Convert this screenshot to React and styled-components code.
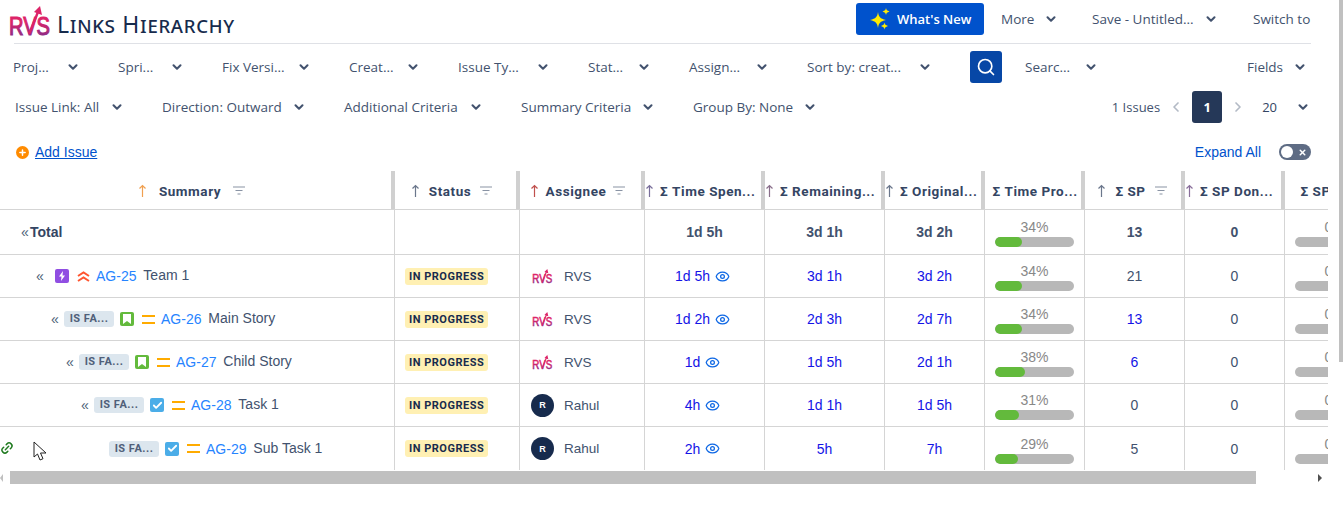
import React from "react";
import styled, { createGlobalStyle } from "styled-components";
import { ChevronDown, ChevronLeft, ChevronRight, Search, Eye, Check, X, Plus, Link2 } from "lucide-react";

const GlobalStyle = createGlobalStyle`
  html, body { margin: 0; padding: 0; background: #fff; overflow: hidden; }
  body { font-family: "Liberation Sans", Arial, sans-serif; color: #42526e; }
`;

const COLUMNS = "395px 125px 125px 120px 120px 100px 100px 100px 100px 100px";

const Page = styled.div`
  position: relative;
  width: 1343px;
  height: 514px;
  overflow: hidden;
`;

const TopBar = styled.header`
  display: flex;
  align-items: center;
  height: 43px;
  margin: 0 32px 0 14px;
  border-bottom: 1px solid #dfe1e6;
`;

const Brand = styled.div`
  display: flex;
  align-items: center;
  gap: 6px;
  margin-left: -5px;
  margin-right: auto;
`;

const Title = styled.h1`
  margin: 5px 0 0;
  font: 400 23px "Noto Sans", sans-serif;
  font-variant: small-caps;
  letter-spacing: 0.7px;
  color: #172b4d;
`;

const NewButton = styled.button`
  display: flex;
  align-items: center;
  gap: 7px;
  width: 128px;
  height: 32px;
  margin: 0 17px 5px 0;
  padding: 0 0 0 14px;
  border: 0;
  border-radius: 3px;
  background: #0052cc;
  color: #fff;
  font: 600 13px "Open Sans", sans-serif;
`;

const Filter = styled.div`
  display: flex;
  flex: none;
  align-items: center;
  justify-content: space-between;
  width: ${(p) => p.$w}px;
  margin-left: ${(p) => (p.$push ? "auto" : 0)};
  font: 400 13.5px "Open Sans", sans-serif;
  white-space: nowrap;
  color: #42526e;
`;

const TopLink = styled(Filter)`
  margin-right: ${(p) => p.$mr || 0}px;
  margin-bottom: 5px;
`;

const FilterRow = styled.div`
  display: flex;
  align-items: center;
  gap: 40px;
  height: 32px;
  padding: ${(p) => p.$pad};
`;

const SearchGroup = styled.div`
  display: flex;
  align-items: center;
  gap: 23px;
`;

const SearchButton = styled.button`
  display: flex;
  align-items: center;
  justify-content: center;
  width: 32px;
  height: 32px;
  padding: 0;
  border: 0;
  border-radius: 3px;
  background: #0747a6;
  color: #fff;
`;

const Pager = styled.div`
  display: flex;
  align-items: center;
  margin-left: auto;
  font: 400 13px "Open Sans", sans-serif;
  color: #42526e;
`;

const PagerArrow = styled.span`
  display: flex;
  margin: ${(p) => p.$m};
  color: #b3bac5;
`;

const PageNumber = styled.span`
  display: flex;
  align-items: center;
  justify-content: center;
  width: 30px;
  height: 32px;
  border-radius: 3px;
  background: #253858;
  color: #fff;
  font-weight: 700;
`;

const PageSize = styled.span`
  display: flex;
  align-items: center;
  gap: 19px;
  color: #344563;
`;

const ActionRow = styled.div`
  display: flex;
  align-items: center;
  height: 16px;
  margin-top: 21px;
  padding: 0 32px 0 16px;
  font-size: 14px;
`;

const AddIcon = styled.span`
  display: flex;
  align-items: center;
  justify-content: center;
  width: 13px;
  height: 13px;
  margin-right: 6px;
  border-radius: 50%;
  background: #ff8b00;
  color: #fff;
`;

const AddLink = styled.a`
  color: #0052cc;
  text-decoration: underline;
  margin-right: auto;
`;

const ExpandLink = styled.a`
  color: #0052cc;
  margin-right: 18px;
`;

const Toggle = styled.span`
  display: flex;
  align-items: center;
  justify-content: space-between;
  width: 32px;
  height: 16px;
  padding: 0 4px 0 2px;
  box-sizing: border-box;
  border-radius: 8px;
  background: #5e6c84;
  color: #fff;
`;

const Knob = styled.span`
  width: 12px;
  height: 12px;
  border-radius: 50%;
  background: #fff;
`;

const TableWrap = styled.div`
  width: 1328px;
  margin-top: 11px;
  overflow: hidden;
`;

const Row = styled.div`
  display: grid;
  grid-template-columns: ${COLUMNS};
  width: 1385px;
  height: ${(p) => p.$h}px;
  box-sizing: border-box;
  border-bottom: ${(p) => (p.$last ? "0" : "1px solid #d5d5d5")};
`;

const HeadCell = styled.div`
  display: flex;
  align-items: center;
  justify-content: ${(p) => (p.$left ? "flex-start" : "center")};
  gap: ${(p) => p.$gap || 6}px;
  padding: 2px ${(p) => p.$pr || 0}px 0 ${(p) => p.$pl || 0}px;
  box-sizing: border-box;
  border-right: 4px solid #d0d0d0;
  font: 700 13.5px "Roboto", sans-serif;
  letter-spacing: 0.55px;
  white-space: nowrap;
  color: #344563;
`;

const Cell = styled.div`
  display: flex;
  align-items: center;
  justify-content: center;
  gap: 5px;
  box-sizing: border-box;
  border-right: 1px solid #d5d5d5;
  font-size: 14px;
  font-weight: ${(p) => (p.$bold ? 700 : 400)};
  color: ${(p) => (p.$link ? "#1414e6" : "#42526e")};
`;

const SpentCell = styled(Cell)`
  padding-right: 4px;
`;

const SummaryCell = styled(Cell)`
  justify-content: flex-start;
  gap: 0;
  padding-left: ${(p) => p.$indent}px;
`;

const StatusCell = styled(Cell)`
  justify-content: flex-start;
  padding-left: 10px;
`;

const AssigneeCell = styled(Cell)`
  justify-content: flex-start;
  gap: 10px;
  padding-left: 11px;
  font-size: 13.5px;
`;

const LogoSlot = styled.span`
  display: flex;
  width: 23px;
  justify-content: center;
`;

const Collapse = styled.span`
  width: ${(p) => p.$w || 13}px;
  font-size: 14px;
  line-height: 1;
  color: #505f79;
`;

const TotalLabel = styled.span`
  font-weight: 700;
  color: #344563;
`;

const LinkTag = styled.span`
  width: 50px;
  height: 16px;
  margin-right: 4px;
  border-radius: 3px;
  background: #dce6ee;
  color: #505f79;
  font: 700 11px/16px "Roboto", sans-serif;
  letter-spacing: 0.5px;
  text-align: center;
`;

const TypeIcon = styled.span`
  display: flex;
  flex: none;
  align-items: center;
  justify-content: center;
  width: 14px;
  height: 14px;
  margin: 0 8px 0 ${(p) => (p.$solo ? 6 : 2)}px;
  border-radius: 2px;
  background: ${(p) => p.$bg};
  color: #fff;
`;

const IssueKey = styled.span`
  margin-right: 3px;
  color: #2684ff;
`;

const IssueName = styled.span`
  position: relative;
  top: -1px;
  color: #42526e;
`;

const Badge = styled.span`
  height: 17px;
  padding: 0 4px;
  border-radius: 3px;
  background: #fff0b3;
  color: #172b4d;
  font: 700 11px/17px "Roboto", sans-serif;
  letter-spacing: 0.5px;
`;

const Avatar = styled.span`
  display: flex;
  align-items: center;
  justify-content: center;
  width: 23px;
  height: 23px;
  border-radius: 50%;
  background: #172b4d;
  color: #fff;
  font-size: 9px;
  font-weight: 700;
`;

const ProgressCell = styled(Cell)`
  flex-direction: column;
  gap: 2px;
  padding-top: 2px;
  line-height: 16px;
  color: #888;
`;

const Track = styled.div`
  width: 79px;
  height: 10px;
  border-radius: 5px;
  background: #b8b8b8;
  overflow: hidden;
`;

const Fill = styled.div`
  height: 100%;
  border-radius: 5px;
  background: #63ba3c;
`;

const RowIcon = styled.span`
  position: absolute;
  left: 0;
  top: 441px;
  display: flex;
  color: #1f7a1f;
`;

const Pointer = styled.svg`
  position: absolute;
  left: 33px;
  top: 441px;
`;

const HScroll = styled.div`
  display: flex;
  align-items: center;
  height: 13px;
  margin-top: 1px;
`;

const Thumb = styled.div`
  width: 1246px;
  height: 13px;
  margin-left: 7px;
  background: #c0c0c0;
`;

const RightArrow = styled.span`
  width: 0;
  height: 0;
  margin-left: 62px;
  border-left: 4px solid #505050;
  border-top: 4px solid transparent;
  border-bottom: 4px solid transparent;
`;

const LeftArrow = styled.span`
  width: 0;
  height: 0;
  border-right: 3px solid #c0c0c0;
  border-top: 4px solid transparent;
  border-bottom: 4px solid transparent;
`;

const VScroll = styled.div`
  position: absolute;
  right: 0;
  top: 0;
  width: 4px;
  height: 362px;
  background: #c0c0c0;
`;

const Caret = () => <ChevronDown size={14} strokeWidth={3.5} color="#42526e" style={{ marginRight: -2 }} />;

const Logo = ({ small }) => (
  <svg width={small ? 21 : 42} height={small ? 15 : 31} viewBox="0 0 42 31">
    <defs>
      <linearGradient id={small ? "rvsS" : "rvsL"} x1="0" y1="0" x2="0" y2="1">
        <stop offset="0.35" stopColor="#dc2468" />
        <stop offset="1" stopColor="#742d90" />
      </linearGradient>
    </defs>
    <text x="0" y="29" fontFamily="Liberation Sans" fontSize="25" fontWeight="400" stroke={`url(#${small ? "rvsS" : "rvsL"})`} strokeWidth="1.100" textLength="41" lengthAdjust="spacingAndGlyphs" fill={`url(#${small ? "rvsS" : "rvsL"})`}>RVS</text>
    <path d="M20 28 L29 6" fill="none" stroke="#dc2468" strokeWidth="2.400" />
    <path d="M25 6 L31 0 L33 9 Z" fill="#dc2468" />
  </svg>
);

const Sparkles = () => (
  <svg width="20" height="22" viewBox="0 0 20 22" fill="#ffeb00">
    <path d="M8 4 C8.800 9 10 10.500 16 12 C10 13.500 8.800 15 8 20 C7.200 15 6 13.500 0 12 C6 10.500 7.200 9 8 4 Z" />
    <path d="M16 0 C16.400 2 17 2.600 19.500 3.500 C17 4.400 16.400 5 16 7 C15.600 5 15 4.400 12.500 3.500 C15 2.600 15.600 2 16 0 Z" />
    <path d="M14.500 14.500 C14.900 16.500 15.500 17.100 18 18 C15.500 18.900 14.900 19.500 14.500 21.500 C14.100 19.500 13.500 18.900 11 18 C13.500 17.100 14.100 16.500 14.500 14.500 Z" />
  </svg>
);

const SortArrow = ({ color }) => (
  <svg width="9" height="14" viewBox="0 0 9 14" fill="none" stroke={color} strokeWidth="1.200" style={{ flex: "none" }}>
    <path d="M4.500 13V1.500M1.500 4.500l3-3 3 3" />
  </svg>
);

const FilterLines = () => (
  <svg width="12" height="9" viewBox="0 0 12 9" fill="none" stroke="#8993a4" strokeWidth="1.200" style={{ flex: "none", marginBottom: 2 }}>
    <path d="M0 1h12M2.500 4.500h7M4.500 8h3" />
  </svg>
);

const Priority = ({ high }) =>
  high ? (
    <svg width="13" height="11" viewBox="0 0 13 11" fill="none" stroke="#ff5630" strokeWidth="2" style={{ flex: "none", marginRight: 6 }}>
      <path d="M1 5l5.500-3.500L12 5M1 10l5.500-3.500L12 10" />
    </svg>
  ) : (
    <svg width="13" height="9" viewBox="0 0 13 9" fill="#ffab00" style={{ flex: "none", marginRight: 6 }}>
      <path d="M0 0h13v2H0zM0 7h13v2H0z" />
    </svg>
  );

const IssueType = ({ type, solo }) => {
  if (type === "epic")
    return (
      <TypeIcon $bg="#904ee2" $solo={solo}>
        <svg width="8" height="10" viewBox="0 0 8 10" fill="#fff"><path d="M5 0L1 5.500h2.500L3 10l4-5.500H4.500z" /></svg>
      </TypeIcon>
    );
  if (type === "story")
    return (
      <TypeIcon $bg="#63ba3c" $solo={solo}>
        <svg width="8" height="10" viewBox="0 0 8 10" fill="#fff"><path d="M0 0h8v10L4 7l-4 3z" /></svg>
      </TypeIcon>
    );
  return (
    <TypeIcon $bg="#4bade8" $solo={solo}>
      <Check size={11} strokeWidth={4} />
    </TypeIcon>
  );
};

const Progress = ({ value }) => (
  <ProgressCell>
    <span>{value}%</span>
    <Track>
      <Fill style={{ width: `${value}%` }} />
    </Track>
  </ProgressCell>
);

const headers = [
  { label: "Summary", arrow: "#f0a050", filter: true, gap: 12, pr: 8 },
  { label: "Status", arrow: "#6b778c", filter: true, gap: 9, pr: 8 },
  { label: "Assignee", arrow: "#c0504d", filter: true, gap: 7, pr: 6 },
  { label: "Σ Time Spen...", arrow: "#7a6f9b", left: true },
  { label: "Σ Remaining...", arrow: "#8a6f8b", left: true },
  { label: "Σ Original...", arrow: "#6b778c", left: true },
  { label: "Σ Time Pro...", pl: 4 },
  { label: "Σ SP", arrow: "#6b778c", filter: true, gap: 9, pr: 2 },
  { label: "Σ SP Don...", arrow: "#8a6f9b", left: true },
  { label: "Σ SP Do..." },
];

const rows = [
  { indent: 36, key: "AG-25", name: "Team 1", type: "epic", high: true, who: "RVS", spent: "1d 5h", left: "3d 1h", orig: "3d 2h", pct: 34, sp: "21" },
  { indent: 51, tag: true, key: "AG-26", name: "Main Story", type: "story", who: "RVS", spent: "1d 2h", left: "2d 3h", orig: "2d 7h", pct: 34, sp: "13", spLink: true },
  { indent: 66, tag: true, key: "AG-27", name: "Child Story", type: "story", who: "RVS", spent: "1d", left: "1d 5h", orig: "2d 1h", pct: 38, sp: "6", spLink: true },
  { indent: 81, tag: true, key: "AG-28", name: "Task 1", type: "task", who: "Rahul", spent: "4h", left: "1d 1h", orig: "1d 5h", pct: 31, sp: "0" },
  { indent: 109, tag: true, leaf: true, key: "AG-29", name: "Sub Task 1", type: "task", who: "Rahul", spent: "2h", left: "5h", orig: "7h", pct: 29, sp: "5" },
];

const App = () => (
  <Page>
    <GlobalStyle />
    <TopBar>
      <Brand>
        <Logo />
        <Title>Links Hierarchy</Title>
      </Brand>
      <NewButton>
        <Sparkles />
        What's New
      </NewButton>
      <TopLink $w={55} $mr={36}>More <Caret /></TopLink>
      <TopLink $w={124} $mr={37}>Save - Untitled... <Caret /></TopLink>
      <TopLink $w={58}>Switch to</TopLink>
    </TopBar>

    <FilterRow $pad="7px 38px 0 13px">
      <Filter $w={65}>Proj... <Caret /></Filter>
      <Filter $w={64}>Spri... <Caret /></Filter>
      <Filter $w={87}>Fix Versi... <Caret /></Filter>
      <Filter $w={69}>Creat... <Caret /></Filter>
      <Filter $w={90}>Issue Ty... <Caret /></Filter>
      <Filter $w={61}>Stat... <Caret /></Filter>
      <Filter $w={78}>Assign... <Caret /></Filter>
      <Filter $w={123}>Sort by: creat... <Caret /></Filter>
      <SearchGroup>
        <SearchButton><Search size={20} strokeWidth={2} /></SearchButton>
        <Filter $w={71}>Searc... <Caret /></Filter>
      </SearchGroup>
      <Filter $w={58} $push>Fields <Caret /></Filter>
    </FilterRow>

    <FilterRow $pad="8px 35px 0 15px">
      <Filter $w={107}>Issue Link: All <Caret /></Filter>
      <Filter $w={142}>Direction: Outward <Caret /></Filter>
      <Filter $w={137}>Additional Criteria <Caret /></Filter>
      <Filter $w={132}>Summary Criteria <Caret /></Filter>
      <Filter $w={122}>Group By: None <Caret /></Filter>
      <Pager>
        1 Issues
        <PagerArrow $m="0 8px 0 8px"><ChevronLeft size={16} strokeWidth={2.500} /></PagerArrow>
        <PageNumber>1</PageNumber>
        <PagerArrow $m="0 16px 0 8px"><ChevronRight size={16} strokeWidth={2.500} /></PagerArrow>
        <PageSize>20 <Caret /></PageSize>
      </Pager>
    </FilterRow>

    <ActionRow>
      <AddIcon><Plus size={9} strokeWidth={4} /></AddIcon>
      <AddLink>Add Issue</AddLink>
      <ExpandLink>Expand All</ExpandLink>
      <Toggle>
        <Knob />
        <X size={9} strokeWidth={4} />
      </Toggle>
    </ActionRow>

    <TableWrap>
      <Row $h={39}>
        {headers.map((h) => (
          <HeadCell key={h.label} $left={h.left} $gap={h.gap} $pr={h.pr} $pl={h.pl}>
            {h.arrow && <SortArrow color={h.arrow} />}
            {h.label}
            {h.filter && <FilterLines />}
          </HeadCell>
        ))}
      </Row>

      <Row $h={45}>
        <SummaryCell $indent={21}>
          <Collapse $w={9}>«</Collapse>
          <TotalLabel>Total</TotalLabel>
        </SummaryCell>
        <Cell />
        <Cell />
        <Cell $bold>1d 5h</Cell>
        <Cell $bold>3d 1h</Cell>
        <Cell $bold>3d 2h</Cell>
        <Progress value={34} />
        <Cell $bold>13</Cell>
        <Cell $bold>0</Cell>
        <Progress value={0} />
      </Row>

      {rows.map((r, i) => (
        <Row key={r.key} $h={43} $last={i === rows.length - 1}>
          <SummaryCell $indent={r.indent}>
            {!r.leaf && <Collapse>«</Collapse>}
            {r.tag && <LinkTag>IS FA...</LinkTag>}
            <IssueType type={r.type} solo={!r.tag} />
            <Priority high={r.high} />
            <IssueKey>{r.key}</IssueKey>
            <IssueName>&nbsp;{r.name}</IssueName>
          </SummaryCell>
          <StatusCell><Badge>IN PROGRESS</Badge></StatusCell>
          <AssigneeCell>
            {r.who === "RVS" ? <LogoSlot><Logo small /></LogoSlot> : <Avatar>R</Avatar>}
            {r.who}
          </AssigneeCell>
          <SpentCell $link>{r.spent}<Eye size={15} strokeWidth={2} color="#0c66e4" /></SpentCell>
          <Cell $link>{r.left}</Cell>
          <Cell $link>{r.orig}</Cell>
          <Progress value={r.pct} />
          <Cell $link={r.spLink}>{r.sp}</Cell>
          <Cell>0</Cell>
          <Progress value={0} />
        </Row>
      ))}
    </TableWrap>

    <HScroll>
      <LeftArrow />
      <Thumb />
      <RightArrow />
    </HScroll>

    <RowIcon><Link2 size={14} strokeWidth={2.500} style={{ transform: "rotate(-45deg)" }} /></RowIcon>
    <Pointer width="14" height="20" viewBox="0 0 14 20">
      <path d="M1 1v15l3.500-3 2.500 6 3-1.300-2.500-5.700H13z" fill="#fff" stroke="#222" strokeWidth="1" />
    </Pointer>
    <VScroll />
  </Page>
);

export default App;
